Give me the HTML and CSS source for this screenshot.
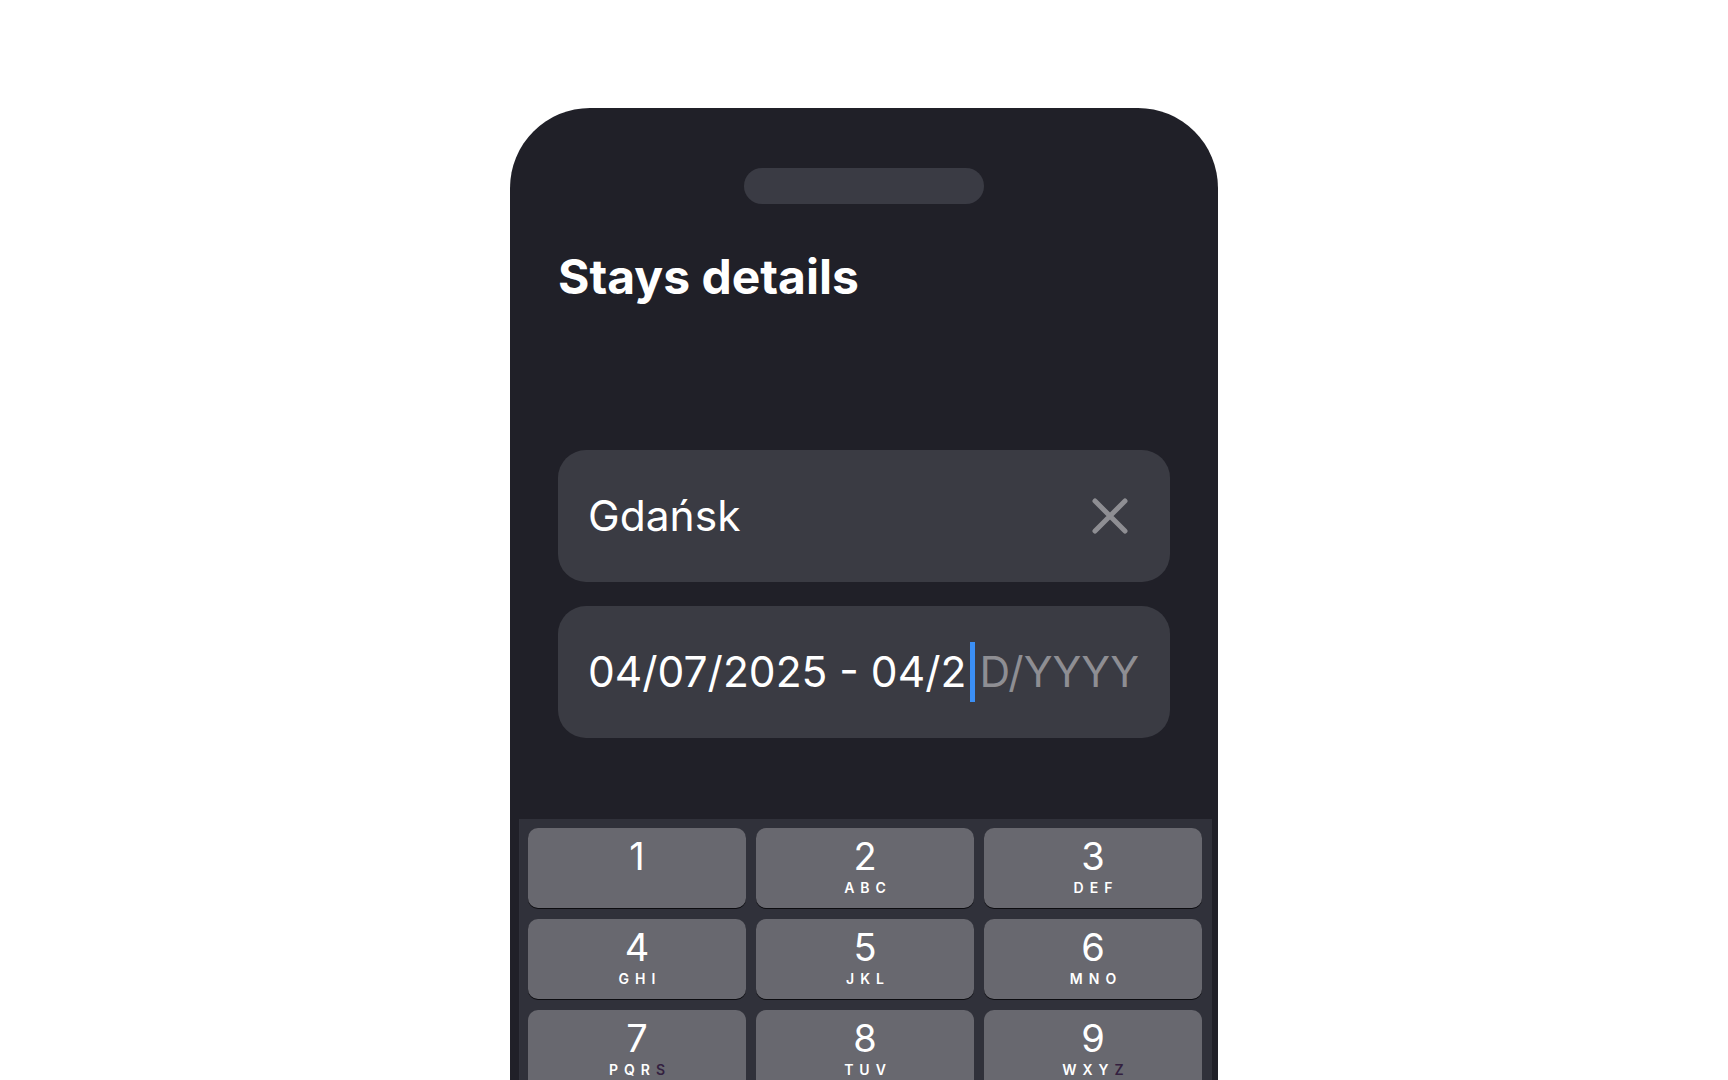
FILE: index.html
```html
<!DOCTYPE html>
<html lang="en">
<head>
<meta charset="utf-8">
<title>Stays details</title>
<link rel="stylesheet" href="styles.css">
</head>
<body>
<div class="phone">
  <div class="notch"></div>
  <h1 class="title">Stays details</h1>
  <div class="fields">
    <div class="field">
      <span class="value">Gdańsk</span>
      <svg class="clear" viewBox="0 0 36 36" width="36" height="36" aria-hidden="true">
        <path d="M3 3 L33 33 M33 3 L3 33" stroke="#8e8e93" stroke-width="5" stroke-linecap="round" fill="none"/>
      </svg>
    </div>
    <div class="field">
      <span class="value">04/07/2025 - 04/2</span><span class="caret"></span><span class="placeholder">D/YYYY</span>
    </div>
  </div>
  <div class="keyboard">
    <div class="key"><span class="digit">1</span></div>
    <div class="key"><span class="digit">2</span><span class="letters">ABC</span></div>
    <div class="key"><span class="digit">3</span><span class="letters">DEF</span></div>
    <div class="key"><span class="digit">4</span><span class="letters">GHI</span></div>
    <div class="key"><span class="digit">5</span><span class="letters">JKL</span></div>
    <div class="key"><span class="digit">6</span><span class="letters">MNO</span></div>
    <div class="key"><span class="digit">7</span><span class="letters">PQR<span class="odd">S</span></span></div>
    <div class="key"><span class="digit">8</span><span class="letters">TUV</span></div>
    <div class="key"><span class="digit">9</span><span class="letters">WXY<span class="odd">Z</span></span></div>
  </div>
</div>
</body>
</html>
```

FILE: styles.css
```css
* { box-sizing: border-box; }

html, body {
  margin: 0;
  height: 1080px;
  overflow: hidden;
  background: #ffffff;
  font-family: Inter, "Noto Sans", "Liberation Sans", sans-serif;
}

.phone {
  width: 708px;
  height: 1200px;
  margin: 108px auto 0;
  background: #202028;
  border-radius: 80px;
  padding-top: 60px;
  display: flex;
  flex-direction: column;
}

.notch {
  align-self: center;
  width: 240px;
  height: 36px;
  border-radius: 18px;
  background: #3a3b44;
}

.title {
  margin: 44px 48px 0;
  font-size: 48px;
  line-height: 1.2;
  font-weight: 700;
  color: #ffffff;
}

.fields {
  margin: 144px 48px 0;
  display: flex;
  flex-direction: column;
  gap: 24px;
}

.field {
  height: 132px;
  border-radius: 28px;
  background: #3a3b43;
  display: flex;
  align-items: center;
  padding: 0 42px 0 30px;
  font-size: 42.5px;
  color: #ffffff;
  white-space: nowrap;
}

.field .value { flex: none; }

.clear {
  margin-left: auto;
  flex: none;
}

.caret {
  display: inline-block;
  width: 5px;
  height: 60px;
  background: #3b8ff5;
  margin: 0 4px;
  flex: none;
}

.placeholder {
  color: #8e8e93;
}

.keyboard {
  margin: 81px 6px 0 9px;
  background: #30313a;
  padding: 9px 10px 9px 9px;
  display: grid;
  grid-template-columns: repeat(3, 1fr);
  column-gap: 10px;
  row-gap: 11px;
}

.key {
  height: 80px;
  border-radius: 10px;
  background: #68686f;
  box-shadow: 0 1px 0 #0c0c10;
  display: flex;
  flex-direction: column;
  align-items: center;
  padding-top: 9px;
  color: #ffffff;
}

.digit {
  font-size: 38px;
  line-height: 38px;
  font-weight: 400;
}

.letters {
  margin-top: 6px;
  font-size: 14px;
  line-height: 14px;
  font-weight: 600;
  letter-spacing: 6px;
  padding-left: 6px;
}

.odd {
  color: #33203f;
}
```
